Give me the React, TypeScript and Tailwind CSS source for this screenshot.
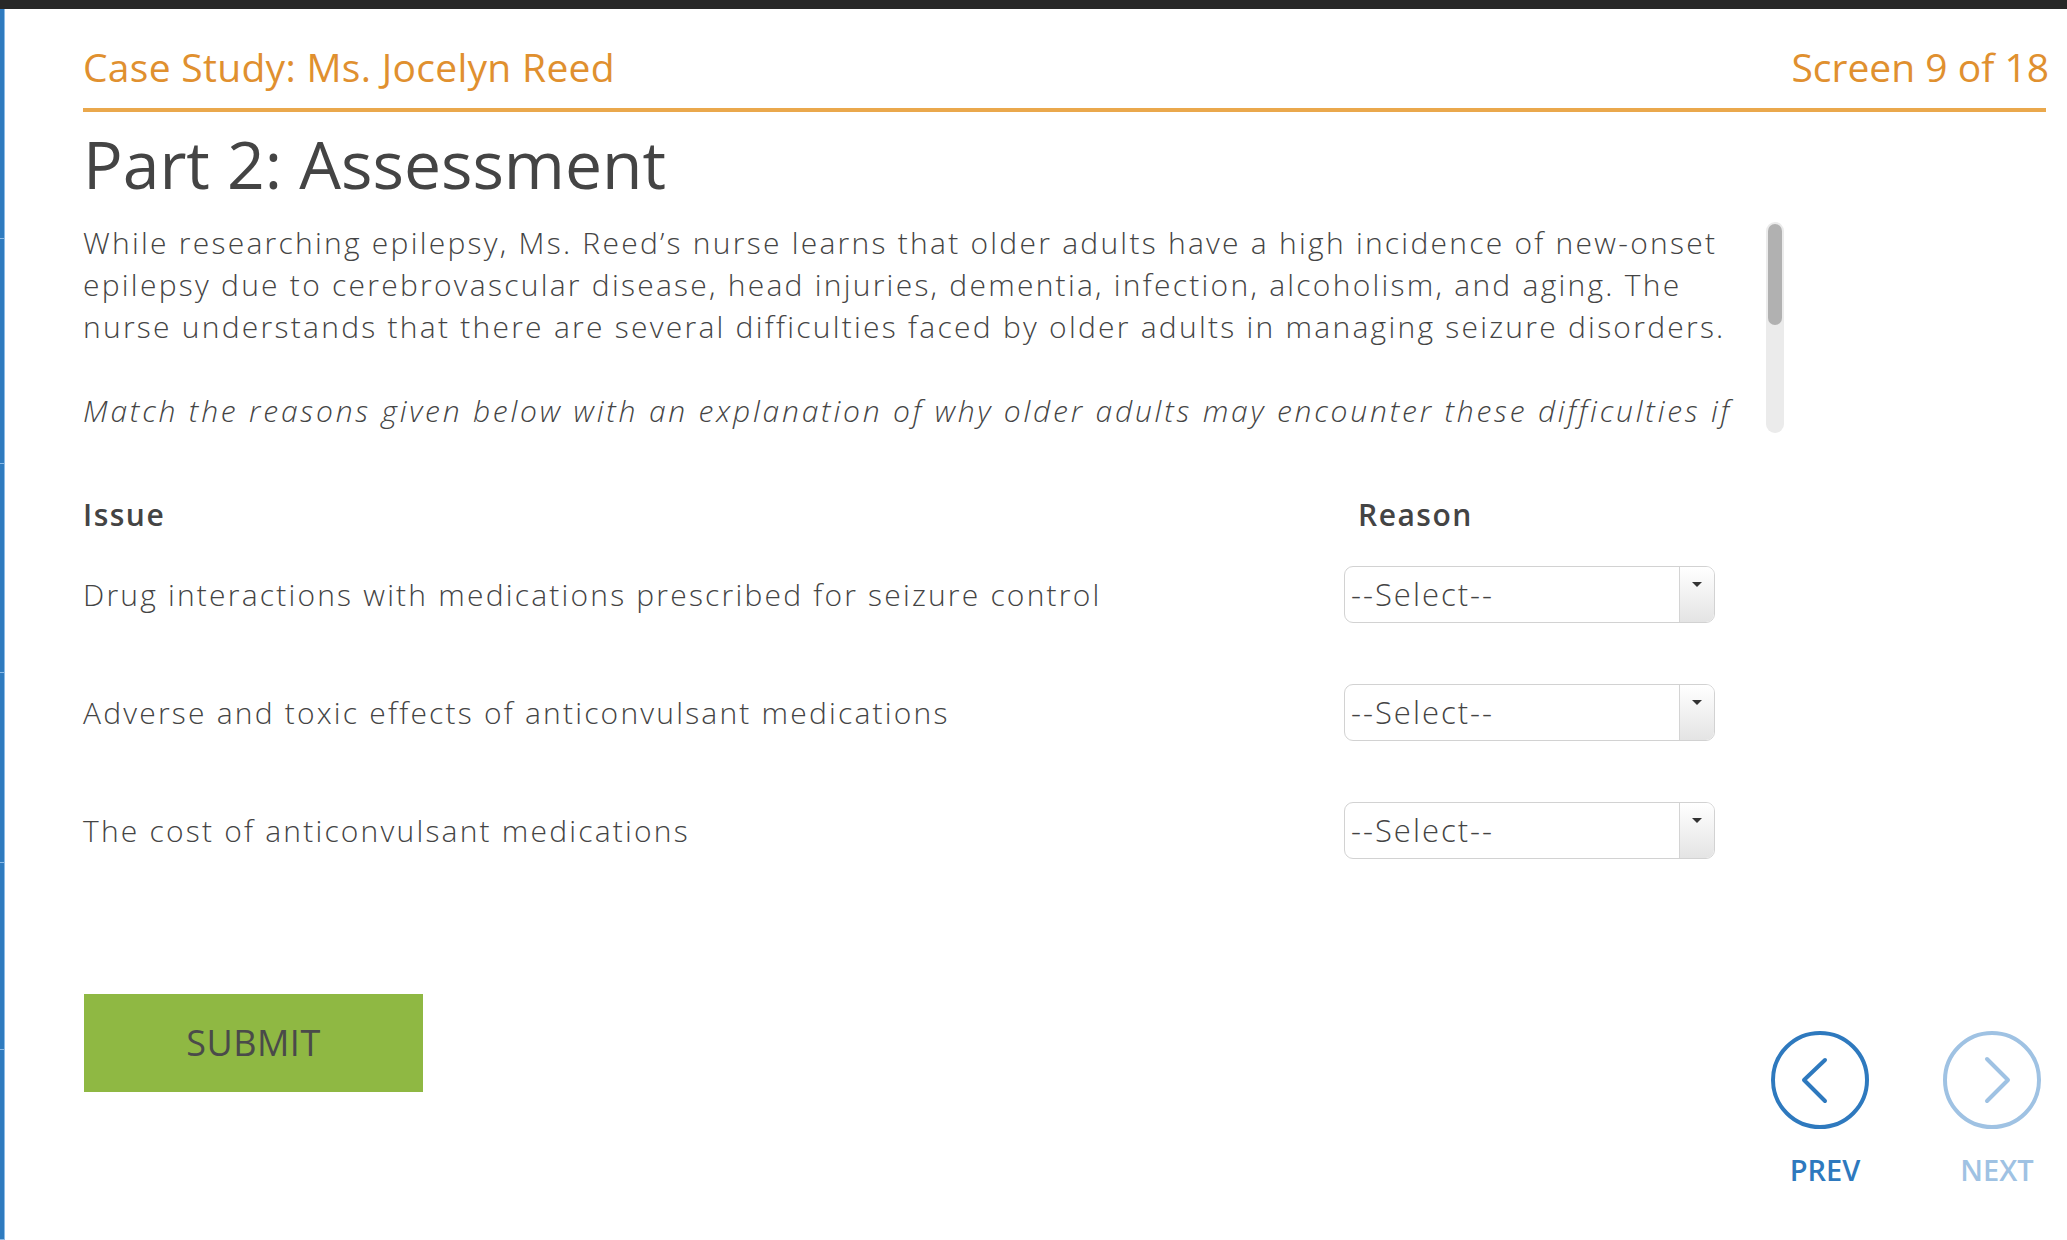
import React from 'react';

const issues = [
  'Drug interactions with medications prescribed for seizure control',
  'Adverse and toxic effects of anticonvulsant medications',
  'The cost of anticonvulsant medications',
];

// left rail is split into stacked blocks with thin light dividers
const railSegments = [230, 225, 209, 190, 187, 190];

function SideRail() {
  return (
    <div className="flex w-[5px] shrink-0 flex-col">
      {railSegments.map((h, i) => (
        <div
          key={i}
          style={{ height: h }}
          className="shrink-0 border-b border-r border-[#8cbbe6] bg-[#2f7bbf]"
        />
      ))}
    </div>
  );
}

function SelectBox() {
  return (
    <div className="flex h-[57px] w-[371px] overflow-hidden rounded-[9px] border border-[#d2d2d2] bg-white">
      <div className="flex flex-1 items-center pl-[6px] text-[31px] font-light tracking-[2px] text-[#444]">--Select--</div>
      <div className="flex w-[35px] justify-center rounded-br-[8px] border-l border-[#d4d4d4] bg-gradient-to-b from-white to-[#e4e4e4] pt-[15px]">
        <div className="h-0 w-0 border-x-[5px] border-t-[5px] border-x-transparent border-t-[#333]" />
      </div>
    </div>
  );
}

function NavButton({ label, dir, dim }: { label: string; dir: 'prev' | 'next'; dim?: boolean }) {
  const color = dim ? '#9fc2e3' : '#2e79be';
  return (
    <div className="flex flex-col items-center">
      <svg width="98" height="98" viewBox="0 0 98 98" fill="none">
        <circle cx="49" cy="49" r="47" stroke={color} strokeWidth="4" />
        {dir === 'prev' ? (
          <polyline points="54,29 33,49 54,70" stroke={color} strokeWidth="4" strokeLinecap="round" strokeLinejoin="round" />
        ) : (
          <polyline points="44,28 65,49 44,70" stroke={color} strokeWidth="4" strokeLinecap="round" strokeLinejoin="round" />
        )}
      </svg>
      <span
        className={`mt-[26px] pl-[10px] text-[29px] font-semibold leading-none ${dim ? 'text-[#9fc2e3]' : 'text-[#2e79be]'}`}
      >
        {label}
      </span>
    </div>
  );
}

export default function App() {
  return (
    <div className="flex h-[1240px] w-[2067px] flex-col overflow-hidden bg-white font-['Open_Sans',sans-serif] text-[#444]">
      <div className="h-[9px] shrink-0 bg-[#282828]" />

      <div className="flex flex-1">
        <SideRail />

        <main className="flex flex-1 flex-col pl-[78px] pr-[18px]">
          {/* Header */}
          <div className="mt-[31px] flex items-center justify-between text-[39px] leading-[54px] text-[#e0902f]">
            <span className="tracking-[0.3px]">Case Study: Ms. Jocelyn Reed</span>
            <span>Screen 9 of 18</span>
          </div>
          <div className="mr-[3px] mt-[14px] h-[4px] bg-[#eaa84c]" />

          <h1 className="mt-[13px] text-[66px] leading-[76px] text-[#444]">Part 2: Assessment</h1>

          {/* Scrollable intro */}
          <div className="mt-[21px] flex h-[211px] gap-[13px]">
            <div className="w-[1670px] overflow-hidden text-[30px] font-light leading-[42px] tracking-[2.25px] text-[#444]">
              <p className="whitespace-nowrap">
                While researching epilepsy, Ms. Reed’s nurse learns that older adults have a high incidence of new-onset
                <br />
                epilepsy due to cerebrovascular disease, head injuries, dementia, infection, alcoholism, and aging. The
                <br />
                nurse understands that there are several difficulties faced by older adults in managing seizure disorders.
              </p>
              <p className="mt-[42px] whitespace-nowrap italic tracking-[2.8px]">
                Match the reasons given below with an explanation of why older adults may encounter these difficulties if
              </p>
            </div>
            <div className="w-[18px] rounded-full bg-[#ebebeb] pt-[2px]">
              <div className="mx-auto h-[101px] w-[14px] rounded-full bg-[#b1b1b1]" />
            </div>
          </div>

          {/* Matching table */}
          <div className="mt-[61px] flex text-[30px] font-semibold leading-[42px] tracking-[1.5px] text-[#444]">
            <span className="w-[1261px]">Issue</span>
            <span className="pl-[14px]">Reason</span>
          </div>
          <div className="mt-[30px] flex flex-col gap-[61px]">
            {issues.map((issue) => (
              <div key={issue} className="flex items-center">
                <span className="w-[1261px] text-[30px] font-light tracking-[2.2px] text-[#444]">{issue}</span>
                <SelectBox />
              </div>
            ))}
          </div>

          {/* Bottom actions */}
          <div className="mt-[135px] flex items-start justify-between">
            <button className="ml-[1px] h-[98px] w-[339px] bg-[#8fb843] text-[36px] font-medium tracking-[0.5px] text-[#4a4a4a]">
              SUBMIT
            </button>
            <div className="mr-[8px] mt-[37px] flex gap-[74px]">
              <NavButton label="PREV" dir="prev" />
              <NavButton label="NEXT" dir="next" dim />
            </div>
          </div>
        </main>
      </div>
    </div>
  );
}
